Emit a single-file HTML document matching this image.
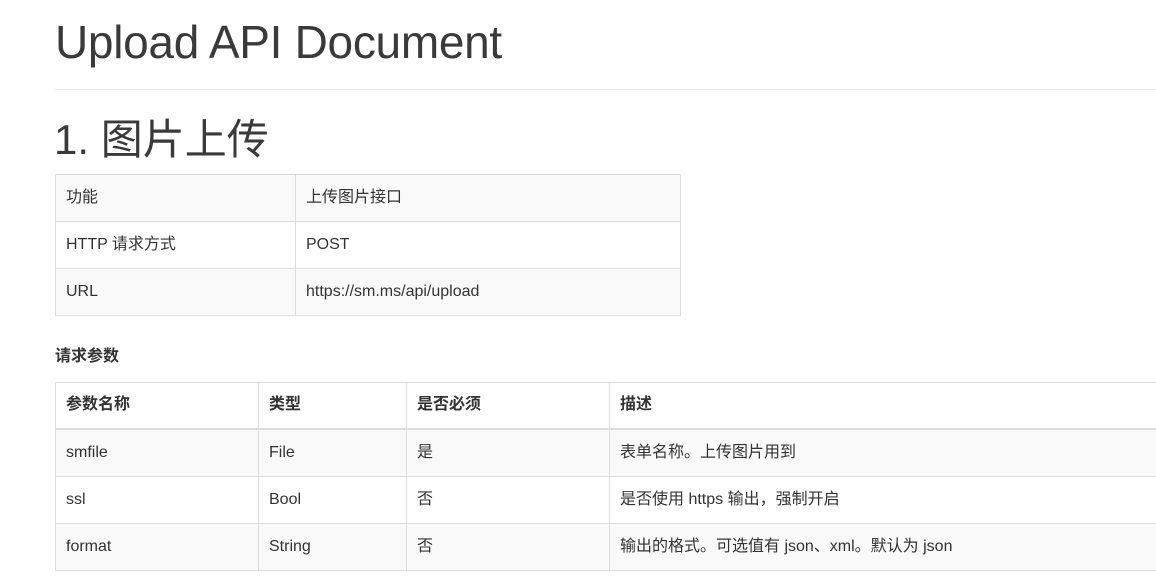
<!DOCTYPE html>
<html><head><meta charset="utf-8"><style>
body{margin:0;background:#fff;color:#333;font-family:"Liberation Sans","Noto Sans CJK SC",sans-serif;width:1156px;height:584px;overflow:hidden;position:relative}
h1{position:absolute;left:55px;top:14px;margin:0;font-weight:normal;font-size:46px;line-height:56px;color:#3a3a3a;letter-spacing:-0.3px}
.hr{position:absolute;left:55px;right:0;top:89px;border-top:1px solid #eee}
h2{position:absolute;left:54px;top:114px;margin:0;font-weight:normal;font-size:42px;line-height:52px;color:#3a3a3a}
table{position:absolute;border-collapse:collapse;font-size:16px;table-layout:fixed}
td,th{border:1px solid #ddd;padding:0 10px;height:46px;line-height:20px;vertical-align:middle;text-align:left;white-space:nowrap;overflow:hidden}
td span,th span{display:inline-block;line-height:20px;vertical-align:middle}
tr.g td{background:#f9f9f9}
th{font-weight:bold;border-bottom:2px solid #ddd;height:45px}
.lbl{position:absolute;left:55px;top:345px;font-weight:bold;font-size:16px;line-height:24px}
</style></head><body>
<h1>Upload API Document</h1>
<div class="hr"></div>
<h2>1. 图片上传</h2>
<table style="left:55px;top:174px;width:625px">
<colgroup><col style="width:240px"><col style="width:385px"></colgroup>
<tr class="g"><td><span>功能</span></td><td><span>上传图片接口</span></td></tr>
<tr><td><span>HTTP 请求方式</span></td><td><span>POST</span></td></tr>
<tr class="g"><td><span>URL</span></td><td><span>https://sm.ms/api/upload</span></td></tr>
</table>
<div class="lbl">请求参数</div>
<table style="left:55px;top:382px;width:1120px">
<colgroup><col style="width:203px"><col style="width:148px"><col style="width:203px"><col style="width:566px"></colgroup>
<tr><th><span>参数名称</span></th><th><span>类型</span></th><th><span>是否必须</span></th><th><span>描述</span></th></tr>
<tr class="g"><td><span>smfile</span></td><td><span>File</span></td><td><span>是</span></td><td><span>表单名称。上传图片用到</span></td></tr>
<tr><td><span>ssl</span></td><td><span>Bool</span></td><td><span>否</span></td><td><span>是否使用 https 输出，强制开启</span></td></tr>
<tr class="g"><td><span>format</span></td><td><span>String</span></td><td><span>否</span></td><td><span>输出的格式。可选值有 json、xml。默认为 json</span></td></tr>
</table>
</body></html>
